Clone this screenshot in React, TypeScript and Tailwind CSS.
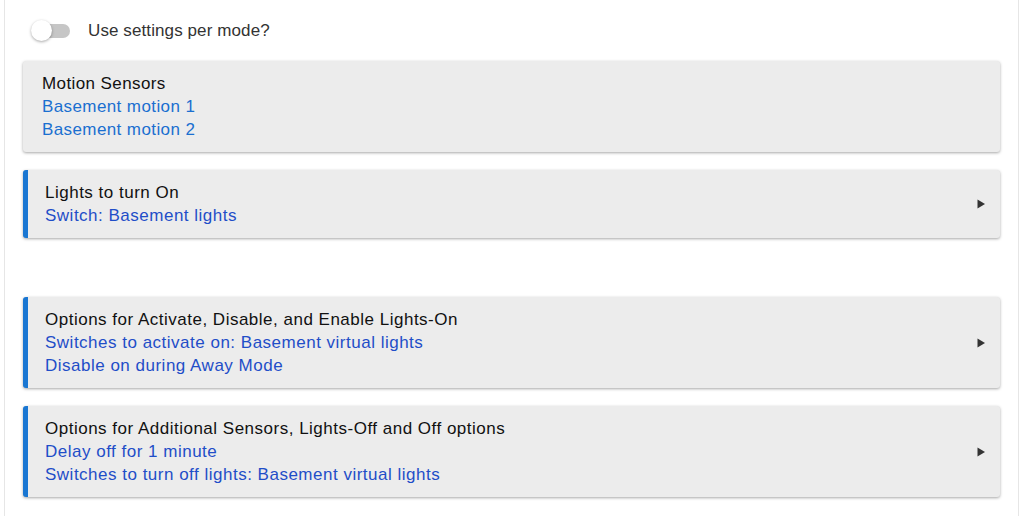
import React from "react";

type Panel = {
  title: string;
  lines: string[];
  expandable?: boolean;
};

const panels: Panel[] = [
  { title: "Lights to turn On", lines: ["Switch: Basement lights"], expandable: true },
];

const lowerPanels: Panel[] = [
  {
    title: "Options for Activate, Disable, and Enable Lights-On",
    lines: ["Switches to activate on: Basement virtual lights", "Disable on during Away Mode"],
    expandable: true,
  },
  {
    title: "Options for Additional Sensors, Lights-Off and Off options",
    lines: ["Delay off for 1 minute", "Switches to turn off lights: Basement virtual lights"],
    expandable: true,
  },
];

function Toggle() {
  return (
    <div className="relative w-[41px] h-[24px] flex items-center">
      <div className="ml-[3px] w-[37px] h-[14px] rounded-full bg-[#c6c6c6]" />
      <div className="absolute left-[1px] top-[1px] w-[21px] h-[21px] rounded-full bg-white shadow-[0_1px_3px_rgba(0,0,0,0.35)]" />
    </div>
  );
}

function Arrow() {
  return (
    <svg width="9" height="10" viewBox="0 0 9 10" className="mr-[14px] shrink-0">
      <path d="M0.5 0.5 L8 5 L0.5 9.5 Z" fill="#333" />
    </svg>
  );
}

function SectionPanel({ title, lines, expandable }: Panel) {
  return (
    <div className="flex items-center rounded-[3px] bg-[#ececec] border-l-[5px] border-[#1976d2] pl-[17px] py-[11px] shadow-[0_1px_3px_rgba(0,0,0,0.35)]">
      <div className="flex-1 leading-[23px] tracking-[0.5px]">
        <div className="text-[#111]">{title}</div>
        {lines.map((l) => (
          <div key={l} className="text-[#1f4ec8]">
            {l}
          </div>
        ))}
      </div>
      {expandable && <Arrow />}
    </div>
  );
}

export default function App() {
  return (
    <div
      className="min-h-[516px] bg-white text-[17px]"
      style={{ fontFamily: '"Liberation Sans", Arial, sans-serif' }}
    >
      <div className="ml-[4px] w-[1015px] min-h-[516px] border-x border-[#e6e6e6] px-[18px]">
        <div className="flex items-center gap-[17px] pt-[19px] mb-[18px] pl-[7px] h-[43px]">
          <Toggle />
          <span className="text-[#333] tracking-[0.1px]">Use settings per mode?</span>
        </div>
        <div className="flex flex-col gap-[18px]">
          <div className="rounded-[3px] bg-[#ececec] pl-[19px] py-[11px] leading-[23px] tracking-[0.4px] shadow-[0_1px_3px_rgba(0,0,0,0.35)]">
            <div className="text-[#111]">Motion Sensors</div>
            <div className="text-[#1a6fd0]">Basement motion 1</div>
            <div className="text-[#1a6fd0]">Basement motion 2</div>
          </div>
          {panels.map((p) => (
            <SectionPanel key={p.title} {...p} />
          ))}
          <div className="h-[23px]" />
          {lowerPanels.map((p) => (
            <SectionPanel key={p.title} {...p} />
          ))}
        </div>
      </div>
    </div>
  );
}
